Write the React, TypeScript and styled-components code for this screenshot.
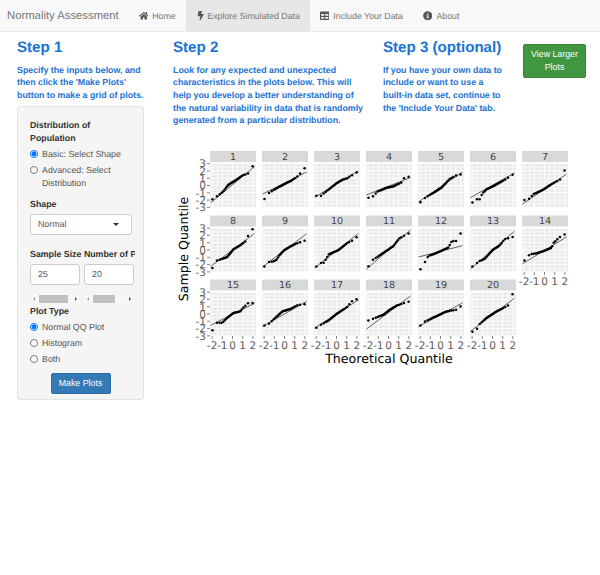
import styled, { createGlobalStyle } from 'styled-components';
import { FaHome, FaBolt, FaTable, FaInfoCircle } from 'react-icons/fa';

const GlobalStyle = createGlobalStyle`
  html, body {
    margin: 0;
    padding: 0;
    background: #fff;
    font-family: "Liberation Sans", Arial, sans-serif;
    font-size: 8.82px;
    color: #333;
    text-rendering: geometricPrecision;
  }
`;

// Navbar
const Navbar = styled.nav`
  display: flex;
  align-items: stretch;
  height: 32px;
  background: #f8f8f8;
  border-bottom: 1px solid #e7e7e7;
  box-sizing: border-box;
`;

const Brand = styled.div`
  display: flex;
  align-items: center;
  padding: 0 10px 0 7px;
  font-size: 11.3px;
  color: #777;
`;

const NavItem = styled.div<{ $active?: boolean }>`
  display: flex;
  align-items: center;
  gap: ${(p) => (p.$active ? 2 : 4)}px;
  padding: 0 10px;
  color: #777;
  background: ${(p) => (p.$active ? '#e7e7e7' : 'transparent')};
  svg {
    color: #555;
    font-size: 9.5px;
  }
`;

// Page
const Main = styled.main`
  display: flex;
  padding: 0 14px 0 17px;
`;

const LeftColumn = styled.div`
  width: 127px;
  flex: none;
`;

const RightColumn = styled.div`
  margin-left: 29px;
  flex: 1;
`;

const StepRow = styled.div`
  display: flex;
`;

const StepBlock = styled.div<{ $width: number }>`
  width: ${(p) => p.$width}px;
  flex: none;
`;

const StepTitle = styled.h3`
  margin: 7px 0 7px;
  font-size: 15.1px;
  line-height: 17.6px;
  font-weight: bold;
  white-space: nowrap;
  color: #1b73d3;
`;

const StepText = styled.p<{ $width?: number }>`
  margin: 0;
  width: ${(p) => (p.$width ? `${p.$width}px` : 'auto')};
  font-size: 8.82px;
  line-height: 12.67px;
  font-weight: bold;
  color: #1b73d3;
`;

const LargerButton = styled.button`
  width: 63px;
  height: 34px;
  margin: 12px 0 0 15px;
  padding: 0 4px;
  font: 8.82px/12.67px "Liberation Sans", Arial, sans-serif;
  color: #fff;
  background: #419641;
  border: 1px solid #3a843a;
  border-radius: 2px;
`;

// Sidebar
const SidePanel = styled.form`
  box-sizing: border-box;
  height: 294px;
  margin-top: 4px;
  padding: 12px 12px 0 12px;
  background: #f5f5f5;
  border: 1px solid #e3e3e3;
  border-radius: 3px;
  overflow: hidden;
`;

const FieldLabel = styled.div<{ $clip?: boolean; $gap?: number }>`
  font-weight: bold;
  line-height: 13px;
  color: #333;
  margin-top: ${(p) => p.$gap || 0}px;
  ${(p) => p.$clip && 'white-space: nowrap; overflow: hidden; width: 105px;'}
`;

const RadioGroup = styled.div`
  display: flex;
  flex-direction: column;
  gap: 3px;
  margin-top: 3px;
`;

const RadioRow = styled.label`
  display: flex;
  align-items: flex-start;
  gap: 4px;
  line-height: 13px;
  color: #555;
  input {
    width: 8px;
    height: 8px;
    margin: 2.5px 0 0;
    flex: none;
  }
`;

const SelectBox = styled.div`
  display: flex;
  align-items: center;
  justify-content: space-between;
  box-sizing: border-box;
  width: 102px;
  height: 21px;
  margin: 3px 0 13px;
  padding: 0 12px 0 7px;
  background: #fff;
  border: 1px solid #ccc;
  border-radius: 3px;
  color: #555;
`;

const Caret = styled.span`
  width: 0;
  height: 0;
  border-left: 3px solid transparent;
  border-right: 3px solid transparent;
  border-top: 3px solid #333;
`;

const NumberRow = styled.div`
  display: flex;
  gap: 4px;
  width: 104px;
  margin-top: 3px;
`;

const NumberField = styled.div`
  flex: 1;
  display: flex;
  flex-direction: column;
`;

const NumberBox = styled.div`
  box-sizing: border-box;
  height: 21px;
  padding: 0 7px;
  line-height: 19px;
  background: #fff;
  border: 1px solid #ccc;
  border-radius: 3px;
  color: #555;
`;

const Scrollbar = styled.div`
  display: flex;
  align-items: center;
  height: 9px;
  margin-top: 10px;
  padding: 0 3px;
  background: #f7f7f7;
`;

const ScrollArrow = styled.span<{ $dir: 'left' | 'right' }>`
  width: 0;
  height: 0;
  flex: none;
  border-top: 2px solid transparent;
  border-bottom: 2px solid transparent;
  ${(p) =>
    p.$dir === 'left'
      ? 'border-right: 2.5px solid #a3a3a3;'
      : 'border-left: 2.5px solid #505050;'}
`;

const ScrollTrack = styled.div`
  flex: 1;
  padding: 0 4px;
`;

const ScrollThumb = styled.div<{ $width: number }>`
  width: ${(p) => p.$width}px;
  height: 8px;
  background: #c1c1c1;
`;

const MakeButton = styled.button`
  display: block;
  width: 60px;
  height: 21px;
  margin: 7px auto 0;
  padding: 0;
  font: 8.82px "Liberation Sans", Arial, sans-serif;
  color: #fff;
  background: #337ab7;
  border: 1px solid #2e6da4;
  border-radius: 2px;
`;

// Plot
const PlotSvg = styled.svg`
  display: block;
  margin-top: 19px;
`;

const StripText = styled.text`
  font: 9.6px "DejaVu Sans", sans-serif;
  fill: #1a1a1a;
  opacity: 0.8;
  text-anchor: middle;
`;

const TickText = styled.text<{ $anchor?: string }>`
  font: 10.5px "DejaVu Sans", sans-serif;
  fill: #5a5a5a;
  text-anchor: ${(p) => p.$anchor || 'middle'};
`;

const AxisTitle = styled.text`
  font: 12.6px "DejaVu Sans", sans-serif;
  fill: #000;
  text-anchor: middle;
`;

// knots are [theoretical, sample] read off each panel, a/b is the reference line
interface Facet {
  a: number;
  b: number;
  knots: number[][];
}

const facets: Facet[] = [
  { a: 0.1, b: 1.15, knots: [[-2, -1.9], [-1.5, -1.45], [-0.9, -0.8], [-0.4, 0.1], [0.4, 0.8], [1, 1.4], [1.5, 1.6], [2, 2.7]] },
  { a: 0.33, b: 0.7, knots: [[-2, -1.9], [-1.6, -1.1], [-1, -0.55], [0, 0.2], [0.6, 0.6], [1.2, 1.15], [1.6, 1.75], [1.8, 1.75], [2, 2.5]] },
  { a: 0.2, b: 0.85, knots: [[-2, -1.4], [-1.5, -1.4], [-1, -0.8], [0, 0.3], [0.6, 0.8], [1, 0.95], [1.5, 1.4], [2, 1.8]] },
  { a: -0.1, b: 0.55, knots: [[-2, -1.7], [-1.5, -1.45], [-1.1, -0.85], [-0.15, -0.3], [0.5, -0.1], [1.3, 0.45], [1.6, 1.2], [2, 1.2]] },
  { a: -0.2, b: 0.95, knots: [[-2, -2.35], [-1.5, -1.7], [-0.7, -1], [0.1, -0.3], [0.9, 0.9], [1.5, 1.35], [2, 1.5]] },
  { a: 0.03, b: 0.78, knots: [[-2, -2.35], [-1.6, -1.9], [-1.25, -1.9], [-1, -1.1], [-0.6, -0.55], [0.4, 0.15], [1.4, 0.95], [2, 1.5]] },
  { a: -0.5, b: 0.95, knots: [[-2, -2], [-1.5, -1.8], [-1.1, -1.2], [-0.1, -0.55], [0.7, 0.2], [1.5, 0.8], [1.7, 1], [2, 2.2]] },
  { a: 0, b: 1.05, knots: [[-2, -2.6], [-1.7, -1.5], [-1.2, -1.3], [-0.55, -1], [0.1, 0.1], [0.75, 0.65], [1.3, 1.2], [1.55, 2], [2, 2.9]] },
  { a: -0.05, b: 1.05, knots: [[-2, -2.3], [-1.5, -1.6], [-1.2, -1.6], [-0.8, -1.4], [-0.5, -0.7], [0, 0], [0.6, 0.5], [1.2, 0.9], [1.6, 1.1], [2, 1.3]] },
  { a: -0.1, b: 1.1, knots: [[-2, -2.3], [-1.6, -1.8], [-1.25, -1.75], [-0.75, -0.6], [0.2, 0], [1.1, 1], [1.7, 1.4], [2, 1.8]] },
  { a: 0.05, b: 1.25, knots: [[-2, -2.3], [-1.7, -1.5], [-0.5, -0.4], [0.5, 0.55], [1, 1.55], [1.6, 2], [2, 2.3]] },
  { a: -0.18, b: 0.36, knots: [[-2, -2.7], [-1.5, -1.6], [-1.2, -0.8], [-0.7, -0.6], [0.75, 0.3], [1.1, 1.2], [1.6, 1.25], [2, 2.35]] },
  { a: 0, b: 1.2, knots: [[-2, -2.3], [-1.25, -1.5], [-0.75, -1.2], [0, 0], [0.7, 0.6], [1.2, 1.5], [2, 1.8]] },
  { a: -0.05, b: 0.85, knots: [[-2, -1.5], [-1.45, -0.6], [-0.8, -0.45], [-0.1, -0.15], [0.7, 0.3], [0.9, 1], [1.6, 1.9], [2, 2.15]] },
  { a: -0.05, b: 0.7, knots: [[-2, -2.3], [-1.8, -1.8], [-1.6, -1.2], [-1, -1.2], [-0.55, -0.55], [0.1, 0.15], [0.75, 0.35], [1.1, 0.95], [1.55, 1.5], [2, 1.5]] },
  { a: 0, b: 0.8, knots: [[-2, -1.6], [-1.5, -1.3], [-1, -0.65], [-0.2, 0.35], [0.6, 0.7], [1.25, 1.2], [2, 1.35]] },
  { a: 0, b: 0.9, knots: [[-2, -1.9], [-1.5, -1.45], [-0.8, -0.9], [0, 0], [1, 0.9], [1.55, 1.8], [2, 2.05]] },
  { a: 0.2, b: 1.05, knots: [[-2, -0.9], [-1.5, -0.65], [-0.5, -0.1], [0.15, 0.6], [0.8, 1.15], [1.5, 1.5], [2, 1.7]] },
  { a: -0.1, b: 0.75, knots: [[-2, -1.6], [-1.5, -1], [-0.4, -0.3], [0.6, 0.35], [1.55, 0.6], [2, 1.05]] },
  { a: -0.1, b: 1.05, knots: [[-2, -2.45], [-1.55, -2.1], [-1.25, -1.35], [-0.6, -0.55], [0.4, 0.35], [1.4, 1.05], [1.65, 1.3], [2, 2.85]] },
];

const PANEL_W = 46;
const PANEL_H = 44;
const COL_STEP = 52;
const ROW_TOPS = [17.5, 82, 146];
const PANEL_LEFT = 37;
const X_UNIT = 10.2;
const Y_UNIT = 7.3;
const N = 25;

const xTicks = [-2, -1, 0, 1, 2];
const yTicks = [-3, -2, -1, 0, 1, 2, 3];

const interpolate = (knots: number[][], q: number) => {
  if (q <= knots[0][0]) return knots[0][1];
  for (let i = 1; i < knots.length; i++) {
    if (q <= knots[i][0]) {
      const [x0, y0] = knots[i - 1];
      const [x1, y1] = knots[i];
      return y0 + ((y1 - y0) * (q - x0)) / (x1 - x0);
    }
  }
  return knots[knots.length - 1][1];
};

// Tukey approximation of the normal quantile
const qnorm = (p: number) => 4.91 * (Math.pow(p, 0.14) - Math.pow(1 - p, 0.14));

const quantiles = Array.from({ length: N }, (_, i) => qnorm((i + 1 - 0.375) / (N + 0.25)));

function Panel({ facet, index }: { facet: Facet; index: number }) {
  const col = index % 7;
  const row = Math.floor(index / 7);
  const left = PANEL_LEFT + col * COL_STEP;
  const top = ROW_TOPS[row];
  const cx = left + 22.5;
  const cy = top + 22;
  const px = (q: number) => cx + q * X_UNIT;
  const py = (s: number) => cy - s * Y_UNIT;
  const isBottom = row === 2 || (row === 1 && col === 6);

  const clampQ = (q: number) => {
    const y = facet.a + facet.b * q;
    return y < -3 ? (-3 - facet.a) / facet.b : y > 3 ? (3 - facet.a) / facet.b : q;
  };
  const q0 = clampQ(-2.15);
  const q1 = clampQ(2.15);

  return (
    <g>
      <rect x={left} y={top - 12.5} width={PANEL_W} height={11} fill="#d9d9d9" />
      <StripText x={left + PANEL_W / 2} y={top - 4}>{index + 1}</StripText>
      <rect x={left} y={top} width={PANEL_W} height={PANEL_H} fill="#ebebeb" />
      {[-1.5, -0.5, 0.5, 1.5].map((q) => (
        <line key={q} x1={px(q)} x2={px(q)} y1={top} y2={top + PANEL_H} stroke="#fff" strokeWidth={0.6} />
      ))}
      {[-2.5, -1.5, -0.5, 0.5, 1.5, 2.5].map((s) => (
        <line key={s} x1={left} x2={left + PANEL_W} y1={py(s)} y2={py(s)} stroke="#fff" strokeWidth={0.6} />
      ))}
      {xTicks.map((q) => (
        <line key={q} x1={px(q)} x2={px(q)} y1={top} y2={top + PANEL_H} stroke="#fff" strokeWidth={1} />
      ))}
      {yTicks.map((s) => (
        <line key={s} x1={left} x2={left + PANEL_W} y1={py(s)} y2={py(s)} stroke="#fff" strokeWidth={1} />
      ))}
      <line x1={px(q0)} y1={py(facet.a + facet.b * q0)} x2={px(q1)} y2={py(facet.a + facet.b * q1)} stroke="#000" strokeWidth={0.6} />
      {quantiles.map((q) => (
        <circle key={q} cx={px(q)} cy={py(interpolate(facet.knots, q))} r={1.25} fill="#000" />
      ))}
      {col === 0 &&
        yTicks.map((s) => (
          <g key={s}>
            <line x1={left - 3} x2={left} y1={py(s)} y2={py(s)} stroke="#333" strokeWidth={0.6} />
            <TickText $anchor="end" x={left - 4} y={py(s) + 3.8}>{s}</TickText>
          </g>
        ))}
      {isBottom &&
        xTicks.map((q) => (
          <g key={q}>
            <line x1={px(q)} x2={px(q)} y1={top + PANEL_H} y2={top + PANEL_H + 3} stroke="#333" strokeWidth={0.6} />
            <TickText x={px(q)} y={top + PANEL_H + 13}>{q}</TickText>
          </g>
        ))}
    </g>
  );
}

function QQPlot() {
  return (
    <PlotSvg width={410} height={225} viewBox="0 0 410 225">
      {facets.map((facet, i) => (
        <Panel key={i} facet={facet} index={i} />
      ))}
      <AxisTitle transform="translate(15 103) rotate(-90)">Sample Quantile</AxisTitle>
      <AxisTitle x={216} y={217}>Theoretical Quantile</AxisTitle>
    </PlotSvg>
  );
}

export default function App() {
  return (
    <>
      <GlobalStyle />
      <Navbar>
        <Brand>Normality Assessment</Brand>
        <NavItem><FaHome />Home</NavItem>
        <NavItem $active><FaBolt />Explore Simulated Data</NavItem>
        <NavItem><FaTable />Include Your Data</NavItem>
        <NavItem><FaInfoCircle />About</NavItem>
      </Navbar>
      <Main>
        <LeftColumn>
          <StepTitle>Step 1</StepTitle>
          <StepText>
            Specify the inputs below, and then click the 'Make Plots' button to make a grid of plots.
          </StepText>
          <SidePanel>
            <FieldLabel>Distribution of Population</FieldLabel>
            <RadioGroup>
              <RadioRow><input type="radio" name="dist" defaultChecked />Basic: Select Shape</RadioRow>
              <RadioRow><input type="radio" name="dist" /><span>Advanced: Select Distribution</span></RadioRow>
            </RadioGroup>
            <FieldLabel $gap={8}>Shape</FieldLabel>
            <SelectBox>Normal<Caret /></SelectBox>
            <FieldLabel $clip>Sample Size Number of Plots</FieldLabel>
            <NumberRow>
              <NumberField>
                <NumberBox>25</NumberBox>
                <Scrollbar>
                  <ScrollArrow $dir="left" />
                  <ScrollTrack><ScrollThumb $width={29} /></ScrollTrack>
                  <ScrollArrow $dir="right" />
                </Scrollbar>
              </NumberField>
              <NumberField>
                <NumberBox>20</NumberBox>
                <Scrollbar>
                  <ScrollArrow $dir="left" />
                  <ScrollTrack><ScrollThumb $width={22} /></ScrollTrack>
                  <ScrollArrow $dir="right" />
                </Scrollbar>
              </NumberField>
            </NumberRow>
            <FieldLabel $gap={1}>Plot Type</FieldLabel>
            <RadioGroup>
              <RadioRow><input type="radio" name="plot" defaultChecked />Normal QQ Plot</RadioRow>
              <RadioRow><input type="radio" name="plot" />Histogram</RadioRow>
              <RadioRow><input type="radio" name="plot" />Both</RadioRow>
            </RadioGroup>
            <MakeButton type="button">Make Plots</MakeButton>
          </SidePanel>
        </LeftColumn>
        <RightColumn>
          <StepRow>
            <StepBlock $width={210}>
              <StepTitle>Step 2</StepTitle>
              <StepText $width={195}>
                Look for any expected and unexpected characteristics in the plots below. This will help you develop a better understanding of the natural variability in data that is randomly generated from a particular distribution.
              </StepText>
            </StepBlock>
            <StepBlock $width={125}>
              <StepTitle>Step 3 (optional)</StepTitle>
              <StepText $width={120}>
                If you have your own data to include or want to use a built-in data set, continue to the 'Include Your Data' tab.
              </StepText>
            </StepBlock>
            <LargerButton type="button">View Larger Plots</LargerButton>
          </StepRow>
          <QQPlot />
        </RightColumn>
      </Main>
    </>
  );
}
